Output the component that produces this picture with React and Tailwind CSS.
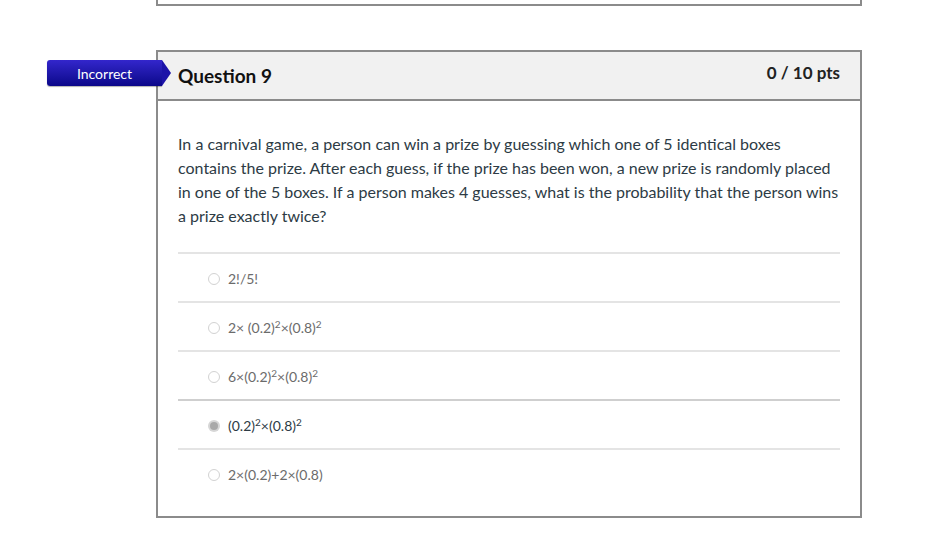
const sup = "text-[10px]";

const answers = [
  { id: "a", label: <>2!/5!</> },
  {
    id: "b",
    label: (
      <>
        2× (0.2)<sup className={sup}>2</sup>×(0.8)<sup className={sup}>2</sup>
      </>
    ),
  },
  {
    id: "c",
    label: (
      <>
        6×(0.2)<sup className={sup}>2</sup>×(0.8)<sup className={sup}>2</sup>
      </>
    ),
  },
  {
    id: "d",
    selected: true,
    label: (
      <>
        (0.2)<sup className={sup}>2</sup>×(0.8)<sup className={sup}>2</sup>
      </>
    ),
  },
  { id: "e", label: <>2×(0.2)+2×(0.8)</> },
];

function Radio({ selected }) {
  if (selected) {
    return (
      <span className="w-[12px] h-[12px] rounded-full bg-[#d6d6d6] flex items-center justify-center">
        <span className="w-[8px] h-[8px] rounded-full bg-[#a9a9a9]" />
      </span>
    );
  }
  return <span className="w-[12px] h-[12px] rounded-full border border-[#d2d2d2] bg-white" />;
}

export default function App() {
  return (
    <div className="w-[926px] h-[546px] bg-white overflow-hidden font-['Lato','Liberation_Sans',sans-serif] text-[#2d3b45]">
      {/* previous question card, only its bottom edge shows */}
      <div className="ml-[156px] w-[706px] h-[6px] border-2 border-t-0 border-[#8b8b8b]" />

      <div className="relative mt-[44px] ml-[156px] w-[706px] border-2 border-[#8b8b8b]">
        {/* Incorrect badge */}
        <div className="absolute left-[-111px] top-[8px] flex items-center">
          <div className="w-[115px] h-[26px] rounded-l-[3px] bg-gradient-to-b from-[#3326cc] to-[#0b078a] flex items-center justify-center text-white text-[14px] shadow-[0_1px_1px_rgba(0,0,0,0.3)]">
            Incorrect
          </div>
          <div className="w-0 h-0 border-y-[13px] border-y-transparent border-l-[9px] border-l-[#1c13a8]" />
        </div>

        <div className="h-[49px] bg-[#f1f1f1] border-b-2 border-[#8b8b8b] flex justify-between pl-[20px] pr-[20px]">
          <div className="self-center pt-[2px] text-[19px] font-bold text-[#111]">Question 9</div>
          <div className="pt-[8px] text-[17px] font-bold text-[#222]">0 / 10 pts</div>
        </div>

        <div className="px-[20px] pt-[31px] pb-[19px]">
          <p className="text-[16px] leading-[24px] text-[#2d3b45]">
            In a carnival game, a person can win a prize by guessing which one of 5 identical boxes contains the
            prize. After each guess, if the prize has been won, a new prize is randomly placed in one of the 5
            boxes. If a person makes 4 guesses, what is the probability that the person wins a prize exactly twice?
          </p>

          <div className="mt-[24px]">
            {answers.map((a) => (
              <div
                key={a.id}
                className={`h-[49px] border-t-2 ${a.selected ? "border-[#cfcfcf]" : "border-[#e4e4e4]"} flex items-center pt-[2px] pl-[30px] gap-[8px]`}
              >
                <Radio selected={a.selected} />
                <span className={`text-[14px] leading-none ${a.selected ? "text-[#2d3b45]" : "text-[#6b6b6b]"}`}>
                  {a.label}
                </span>
              </div>
            ))}
          </div>
        </div>
      </div>
    </div>
  );
}
